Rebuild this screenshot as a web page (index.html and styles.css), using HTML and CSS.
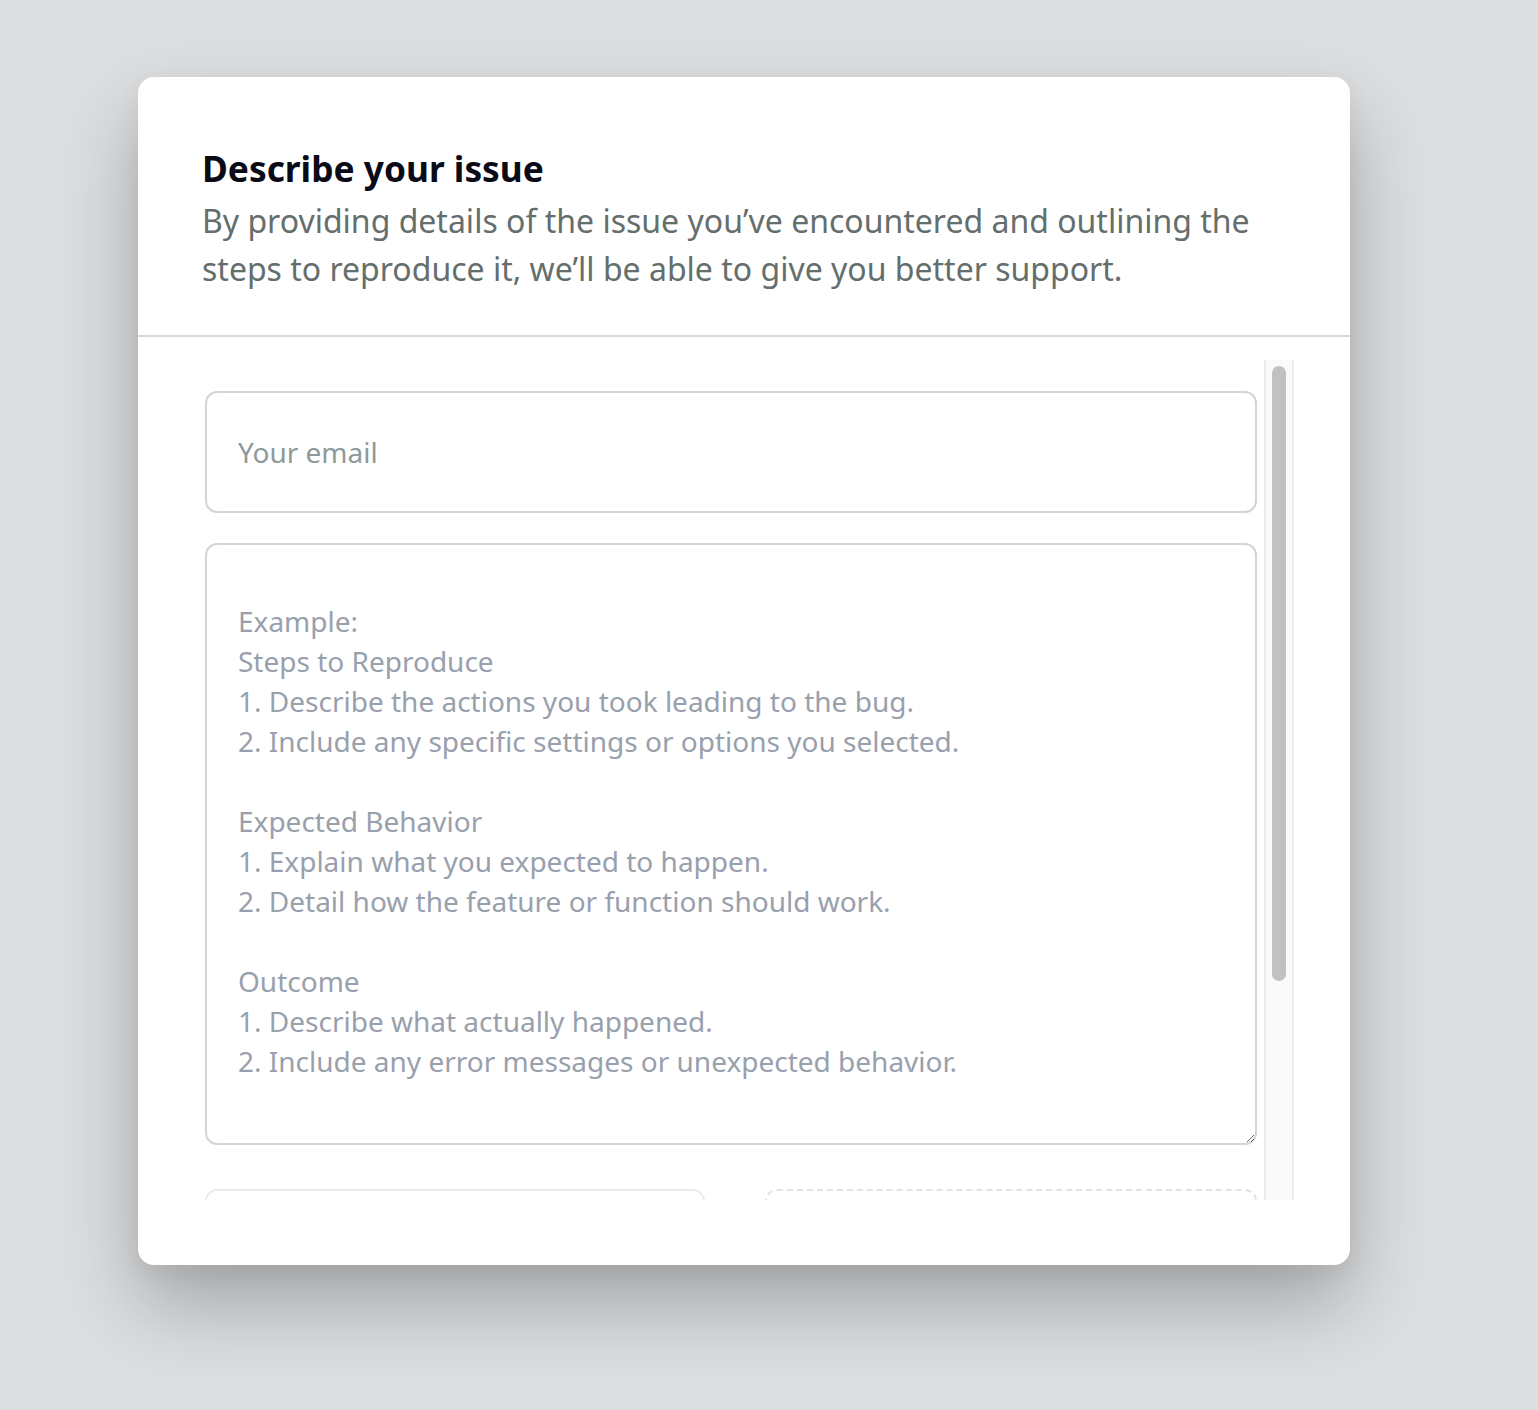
FILE: index.html
```html
<!DOCTYPE html>
<html lang="en">
<head>
<meta charset="utf-8">
<title>Describe your issue</title>
<link rel="stylesheet" href="styles.css">
</head>
<body>
<div class="page">
  <section class="modal">
    <header class="modal-header">
      <h1 class="title">Describe your issue</h1>
      <p class="subtitle">By providing details of the issue you’ve encountered and outlining the steps to reproduce it, we’ll be able to give you better support.</p>
    </header>
    <div class="modal-body">
      <div class="scroller">
        <div class="form">
          <input class="field email" type="email" placeholder="Your email">
          <textarea class="field details" placeholder="Example:&#10;Steps to Reproduce&#10;1. Describe the actions you took leading to the bug.&#10;2. Include any specific settings or options you selected.&#10;&#10;Expected Behavior&#10;1. Explain what you expected to happen.&#10;2. Detail how the feature or function should work.&#10;&#10;Outcome&#10;1. Describe what actually happened.&#10;2. Include any error messages or unexpected behavior."></textarea>
          <div class="attach-row">
            <div class="attach-box"></div>
            <div class="drop-box"></div>
          </div>
        </div>
      </div>
      <div class="scrollbar" aria-hidden="true">
        <div class="scroll-thumb"></div>
      </div>
    </div>
  </section>
</div>
</body>
</html>
```

FILE: styles.css
```css
html, body {
  margin: 0;
  padding: 0;
}
body {
  background: #dcdee0;
  font-family: "Noto Sans", "Open Sans", sans-serif;
  min-height: 1410px;
}
.page {
  display: flex;
  padding: 77px 0 0 138px;
}
.modal {
  width: 1212px;
  height: 1188px;
  background: #ffffff;
  border-radius: 16px;
  box-shadow: 0 40px 80px rgba(0, 0, 0, 0.26), 0 10px 24px rgba(0, 0, 0, 0.05);
  display: flex;
  flex-direction: column;
  overflow: hidden;
}
.modal-header {
  padding: 66px 64px 42px 64px;
  border-bottom: 2px solid #d6dbdb;
}
.title {
  margin: 0 0 4px 0;
  font-size: 35.3px;
  line-height: 50px;
  font-weight: 700;
  color: #0b0b18;
}
.subtitle {
  margin: 0;
  font-size: 32px;
  line-height: 48px;
  color: #646e6c;
}
.modal-body {
  flex: 1;
  padding: 23px 56px 65px 64px;
  display: flex;
  min-height: 0;
}
.scroller {
  flex: 1;
  overflow: hidden;
}
.scrollbar {
  width: 30px;
  flex: none;
  box-sizing: border-box;
  background: #fafafa;
  border-left: 2px solid #ececec;
  border-right: 2px solid #ececec;
  padding: 6px 6px;
}
.scroll-thumb {
  height: 615px;
  background: #c1c1c1;
  border-radius: 8px;
}
.form {
  padding: 31px 7px 64px 3px;
  display: flex;
  flex-direction: column;
}
.field {
  box-sizing: border-box;
  width: 100%;
  border: 2px solid #cfd6d6;
  border-radius: 12px;
  font-family: "Noto Sans", "Open Sans", sans-serif;
  font-size: 28px;
  color: #333;
  background: #fff;
  outline: none;
  margin: 0;
}
.email {
  height: 122px;
  padding: 0 31px;
}
.email::placeholder {
  color: #8d9a9a;
}
.details {
  margin-top: 30px;
  height: 602px;
  padding: 56px 31px 20px 31px;
  line-height: 40px;
  resize: vertical;
  display: block;
}
.details::placeholder {
  color: #99a0ad;
}
.attach-row {
  margin-top: 44px;
  display: grid;
  grid-template-columns: 500px 1fr;
  column-gap: 60px;
}
.attach-box {
  height: 230px;
  border: 2px solid #ebebeb;
  border-radius: 12px;
  box-sizing: border-box;
}
.drop-box {
  height: 230px;
  border: 2px dashed #e3e3e5;
  border-radius: 12px;
  box-sizing: border-box;
}
```
